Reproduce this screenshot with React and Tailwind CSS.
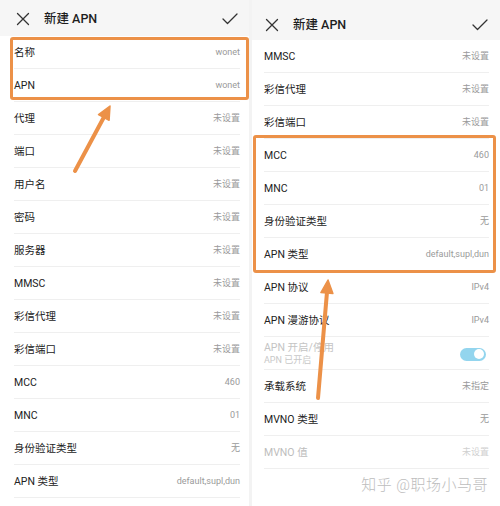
import React from 'react';

const ORANGE = '#ec9148';

const LEFT_ROWS = [
    ['名称', 'wonet'],
    ['APN', 'wonet'],
    ['代理', '未设置'],
    ['端口', '未设置'],
    ['用户名', '未设置'],
    ['密码', '未设置'],
    ['服务器', '未设置'],
    ['MMSC', '未设置'],
    ['彩信代理', '未设置'],
    ['彩信端口', '未设置'],
    ['MCC', '460'],
    ['MNC', '01'],
    ['身份验证类型', '无'],
    ['APN 类型', 'default,supl,dun'],
];

const RIGHT_TOP = [
    ['MMSC', '未设置'],
    ['彩信代理', '未设置'],
    ['彩信端口', '未设置'],
];

const RIGHT_BOXED = [
    ['MCC', '460'],
    ['MNC', '01'],
    ['身份验证类型', '无'],
    ['APN 类型', 'default,supl,dun'],
];

function CloseIcon() {
    return (
        <svg width="14" height="14" viewBox="0 0 14 14" fill="none" stroke="#333" strokeWidth="1.3" strokeLinecap="round">
            <path d="M1.5 1.5 L12.5 12.5 M12.5 1.5 L1.5 12.5" />
        </svg>
    );
}

function CheckIcon() {
    return (
        <svg width="16" height="12" viewBox="0 0 16 12" fill="none" stroke="#333" strokeWidth="1.3" strokeLinecap="round" strokeLinejoin="round">
            <path d="M1 6 L5.5 10.5 L15 1" />
        </svg>
    );
}

function Header({ className }) {
    return (
        <div className={`flex items-center bg-[#f6f6f6] ${className}`}>
            <CloseIcon />
            <span className="ml-[14px] text-[12.5px] font-medium text-[#1e1e1e]">新建 APN</span>
            <div className="ml-auto">
                <CheckIcon />
            </div>
        </div>
    );
}

function Row({ label, value, inset, muted }) {
    return (
        <div className={`flex h-[33px] items-center justify-between border-b border-[#efefef] pt-[2px] ${inset}`}>
            <span className={`text-[10.5px] ${muted ? 'text-[#bdbdbd]' : 'text-[#222]'}`}>{label}</span>
            <span className={`text-[9px] ${muted ? 'text-[#d0d0d0]' : 'text-[#9a9a9a]'}`}>{value}</span>
        </div>
    );
}

function Toggle() {
    return (
        <div className="flex h-[13px] w-[26px] items-center justify-end rounded-full bg-[#93d5ee] pr-[2px]">
            <div className="h-[10px] w-[10px] rounded-full bg-white" />
        </div>
    );
}

export default function App() {
    return (
        <div className="relative flex h-[506px] w-[500px] bg-[#f3f3f3] font-['Roboto','Noto_Sans_CJK_SC',sans-serif]">
            {/* left phone */}
            <div className="flex w-[249px] flex-col bg-white">
                <Header className="h-[36px] pl-[16px] pr-[11px] pt-[2px]" />
                <div className="relative">
                    {LEFT_ROWS.slice(0, 2).map(([l, v]) => (
                        <Row key={l} label={l} value={v} inset="ml-[14px] mr-[9px]" />
                    ))}
                    <div className="pointer-events-none absolute left-[10px] right-0 top-[1px] bottom-[2px] rounded-[3px] border-[3px] border-[#ec9148]" />
                </div>
                {LEFT_ROWS.slice(2).map(([l, v]) => (
                    <Row key={l} label={l} value={v} inset="ml-[14px] mr-[9px]" />
                ))}
            </div>

            {/* right phone */}
            <div className="ml-[3px] flex w-[248px] flex-col bg-white">
                <Header className="h-[40px] pl-[13px] pr-[12px] pt-[10px]" />
                {RIGHT_TOP.map(([l, v]) => (
                    <Row key={l} label={l} value={v} inset="ml-[12px] mr-[11px]" />
                ))}
                <div className="relative">
                    {RIGHT_BOXED.map(([l, v]) => (
                        <Row key={l} label={l} value={v} inset="ml-[12px] mr-[11px]" />
                    ))}
                    <div className="pointer-events-none absolute left-[1px] right-[4px] top-[-4px] bottom-[-2px] rounded-[3px] border-[3px] border-[#ec9148]" />
                </div>
                <Row label="APN 协议" value="IPv4" inset="ml-[12px] mr-[11px]" />
                <Row label="APN 漫游协议" value="IPv4" inset="ml-[12px] mr-[11px]" />
                <div className="ml-[12px] mr-[11px] flex h-[33px] items-center justify-between border-b border-[#efefef] pt-[2px]">
                    <div className="flex flex-col leading-[12px]">
                        <span className="text-[10.5px] text-[#c4c4c4]">APN 开启/停用</span>
                        <span className="text-[9px] text-[#c8c8c8]">APN 已开启</span>
                    </div>
                    <div className="mr-[3px]">
                        <Toggle />
                    </div>
                </div>
                <Row label="承载系统" value="未指定" inset="ml-[12px] mr-[11px]" />
                <Row label="MVNO 类型" value="无" inset="ml-[12px] mr-[11px]" />
                <Row label="MVNO 值" value="未设置" inset="ml-[12px] mr-[11px]" muted />
                <div className="mr-[12px] mt-[5px] text-right text-[15px] font-light tracking-[0.5px] text-[#bdbdbd]">知乎 @职场小马哥</div>
            </div>

            {/* annotation arrows */}
            <svg className="pointer-events-none absolute left-0 top-0" width="500" height="506" viewBox="0 0 500 506">
                <line x1="75" y1="171" x2="104" y2="117" stroke={ORANGE} strokeWidth="4" strokeLinecap="round" />
                <polygon points="110,106 109.1,120.3 98.5,114.7" fill={ORANGE} stroke={ORANGE} strokeWidth="1.5" strokeLinejoin="round" />
                <line x1="318" y1="398" x2="327" y2="292" stroke={ORANGE} strokeWidth="4" strokeLinecap="round" />
                <polygon points="328,280 332.9,293.5 320.9,292.5" fill={ORANGE} stroke={ORANGE} strokeWidth="1.5" strokeLinejoin="round" />
            </svg>
        </div>
    );
}
